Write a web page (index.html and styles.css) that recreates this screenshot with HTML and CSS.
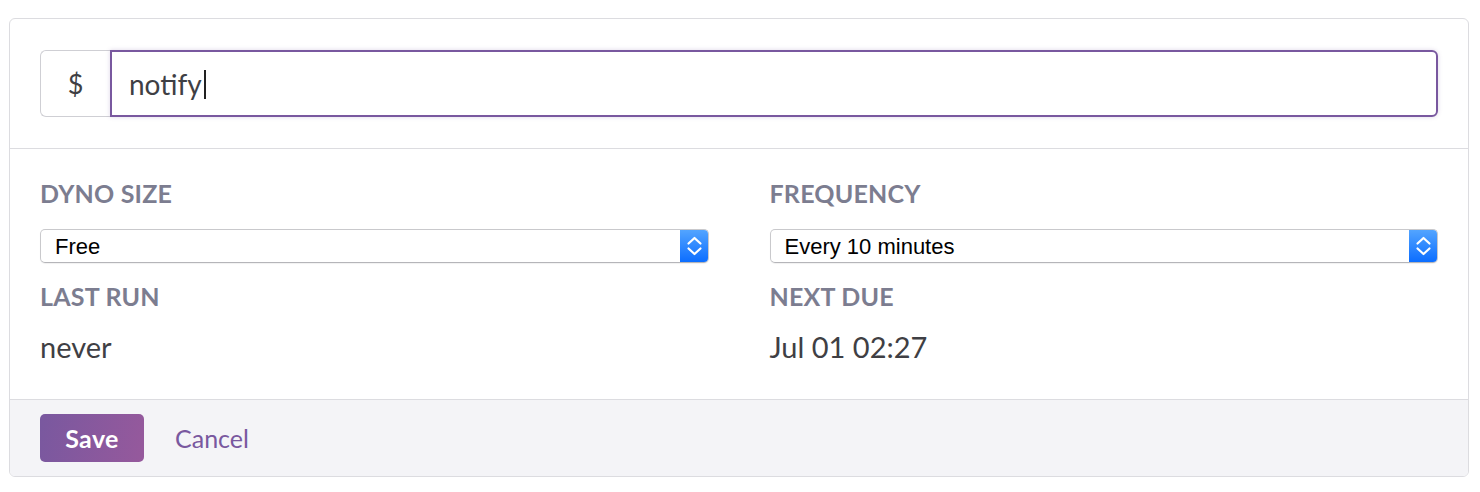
FILE: index.html
```html
<!DOCTYPE html>
<html>
<head>
<meta charset="utf-8">
<link rel="stylesheet" href="styles.css">
</head>
<body>
<div class="card">
  <div class="cmd">
    <div class="addon">$</div>
    <div class="input"><span class="txt">notify</span><span class="caret"></span></div>
  </div>
  <div class="fields">
    <div class="col">
      <div class="label">Dyno Size</div>
      <div class="select"><span class="sel-text">Free</span><span class="stepper"><svg width="29" height="34" viewBox="0 0 29 34"><path d="M8.5 14.5 L14.5 9 L20.5 14.5 M8.5 19.5 L14.5 25 L20.5 19.5" fill="none" stroke="#fff" stroke-width="2.2" stroke-linecap="round" stroke-linejoin="round"/></svg></span></div>
      <div class="label">Last Run</div>
      <div class="value">never</div>
    </div>
    <div class="col">
      <div class="label">Frequency</div>
      <div class="select"><span class="sel-text">Every 10 minutes</span><span class="stepper"><svg width="29" height="34" viewBox="0 0 29 34"><path d="M8.5 14.5 L14.5 9 L20.5 14.5 M8.5 19.5 L14.5 25 L20.5 19.5" fill="none" stroke="#fff" stroke-width="2.2" stroke-linecap="round" stroke-linejoin="round"/></svg></span></div>
      <div class="label">Next Due</div>
      <div class="value">Jul 01 02:27</div>
    </div>
  </div>
  <div class="footer">
    <button class="save">Save</button>
    <a class="cancel">Cancel</a>
  </div>
</div>
</body>
</html>
```
FILE: styles.css
```css
html, body {
  margin: 0;
  padding: 0;
  background: #fff;
}
body {
  padding: 18px 11px 0 9px;
  font-family: Lato, "Open Sans", sans-serif;
  color: #3f3f44;
}
.card {
  border: 1px solid #dcdce0;
  border-radius: 6px;
  overflow: hidden;
  background: #fff;
}
.cmd {
  display: flex;
  padding: 31px 30px 31px 30px;
  border-bottom: 1px solid #dcdce0;
}
.addon {
  width: 69px;
  height: 65px;
  border: 1px solid #cfcfd4;
  border-right: none;
  border-radius: 6px 0 0 6px;
  display: flex;
  align-items: center;
  justify-content: center;
  font-size: 27px;
  color: #3f3f44;
}
.input {
  flex: 1;
  height: 63px;
  border: 2px solid #79589f;
  border-radius: 0 6px 6px 0;
  box-shadow: 0 0 4px rgba(121, 88, 159, 0.25);
  display: flex;
  align-items: center;
  padding-left: 17px;
  font-size: 28px;
  color: #3f3f44;
}
.caret {
  display: inline-block;
  width: 2px;
  height: 29px;
  background: #222;
  margin-left: 2px;
  margin-top: 1px;
}
.fields {
  display: grid;
  grid-template-columns: 1fr 1fr;
  column-gap: 61px;
  padding: 30px 30px 35px 30px;
}
.col {
  display: flex;
  flex-direction: column;
}
.label {
  font-size: 25px;
  font-weight: 700;
  line-height: 29px;
  text-transform: uppercase;
  color: #7c7d90;
  letter-spacing: 0.2px;
}
.select {
  margin: 21px 0 19px 0;
  height: 32px;
  border: 1px solid #c9c9cc;
  border-bottom-color: #b5b5b9;
  border-radius: 5px;
  display: flex;
  align-items: center;
  justify-content: space-between;
  overflow: hidden;
  box-shadow: 0 1px 1px rgba(0,0,0,0.06);
}
.sel-text {
  font-family: "Liberation Sans", Arial, sans-serif;
  font-size: 22px;
  color: #000;
  padding-left: 14px;
  padding-top: 1px;
}
.stepper {
  width: 29px;
  height: 34px;
  margin-right: -1px;
  background: linear-gradient(#55a6ff, #0a6cff);
  display: flex;
}
.value {
  margin-top: 18px;
  font-size: 29px;
  line-height: 35px;
  color: #3f3f44;
}
.footer {
  border-top: 1px solid #dcdce0;
  background: #f4f4f7;
  padding: 14px 30px;
  display: flex;
  align-items: center;
}
.save {
  width: 104px;
  height: 48px;
  border: none;
  border-radius: 5px;
  background: linear-gradient(100deg, #79589f, #96599c);
  color: #fff;
  font-family: Lato, sans-serif;
  font-weight: 700;
  font-size: 25px;
  letter-spacing: 0.4px;
  padding: 0;
}
.cancel {
  margin-left: 31px;
  font-size: 25px;
  color: #79589f;
}
```
